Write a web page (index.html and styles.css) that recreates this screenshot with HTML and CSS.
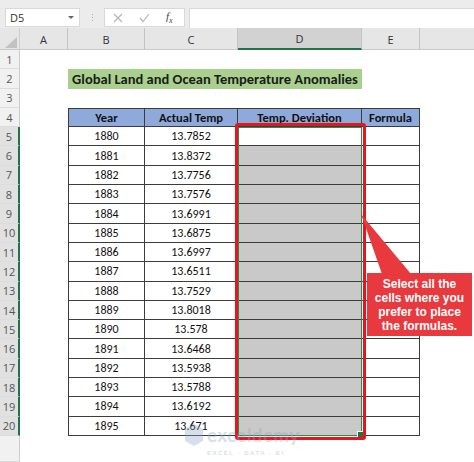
FILE: index.html
```html
<!DOCTYPE html>
<html lang="en">
<head>
    <meta charset="UTF-8">
    <title>Global Land and Ocean Temperature Anomalies</title>
    <link rel="stylesheet" href="styles.css">
</head>
<body>
    <div class="toolbar">
        <div class="namebox"><span>D5</span><span class="caret"></span></div>
        <div class="grip"><i></i><i></i><i></i></div>
        <div class="fxbox">
            <svg class="ico" width="10" height="10" viewBox="0 0 10 10"><path d="M1 1 L9 9 M9 1 L1 9" stroke="#b4b4b4" stroke-width="1.2" fill="none"/></svg>
            <svg class="ico" width="11" height="10" viewBox="0 0 11 10"><path d="M1 5 L4 8.5 L10 1" stroke="#b4b4b4" stroke-width="1.2" fill="none"/></svg>
            <span class="fx">f<sub>x</sub></span>
        </div>
        <div class="formula"></div>
    </div>

    <div class="sheet">
        <div class="colhead">
            <div class="corner"><svg width="20" height="22" viewBox="0 0 20 22"><polygon points="17,9 17,20 5,20" fill="#c2c2c2"/></svg></div>
            <div class="ch">A</div>
            <div class="ch">B</div>
            <div class="ch">C</div>
            <div class="ch on">D</div>
            <div class="ch">E</div>
            <div class="ch last"></div>
        </div>

        <div class="row"><div class="rh">1</div></div>
        <div class="row"><div class="rh">2</div><div class="c"></div><div class="title">Global Land and Ocean Temperature Anomalies</div></div>
        <div class="row"><div class="rh">3</div></div>
        <div class="row hdr"><div class="rh">4</div><div class="c"></div><div class="t first">Year</div><div class="t">Actual Temp</div><div class="t">Temp. Deviation</div><div class="t">Formula</div></div>
        <div class="row on"><div class="rh">5</div><div class="c"></div><div class="t first">1880</div><div class="t">13.7852</div><div class="t"></div><div class="t"></div></div>
        <div class="row on"><div class="rh">6</div><div class="c"></div><div class="t first">1881</div><div class="t">13.8372</div><div class="t g"></div><div class="t"></div></div>
        <div class="row on"><div class="rh">7</div><div class="c"></div><div class="t first">1882</div><div class="t">13.7756</div><div class="t g"></div><div class="t"></div></div>
        <div class="row on"><div class="rh">8</div><div class="c"></div><div class="t first">1883</div><div class="t">13.7576</div><div class="t g"></div><div class="t"></div></div>
        <div class="row on"><div class="rh">9</div><div class="c"></div><div class="t first">1884</div><div class="t">13.6991</div><div class="t g"></div><div class="t"></div></div>
        <div class="row on"><div class="rh">10</div><div class="c"></div><div class="t first">1885</div><div class="t">13.6875</div><div class="t g"></div><div class="t"></div></div>
        <div class="row on"><div class="rh">11</div><div class="c"></div><div class="t first">1886</div><div class="t">13.6997</div><div class="t g"></div><div class="t"></div></div>
        <div class="row on"><div class="rh">12</div><div class="c"></div><div class="t first">1887</div><div class="t">13.6511</div><div class="t g"></div><div class="t"></div></div>
        <div class="row on"><div class="rh">13</div><div class="c"></div><div class="t first">1888</div><div class="t">13.7529</div><div class="t g"></div><div class="t"></div></div>
        <div class="row on"><div class="rh">14</div><div class="c"></div><div class="t first">1889</div><div class="t">13.8018</div><div class="t g"></div><div class="t"></div></div>
        <div class="row on"><div class="rh">15</div><div class="c"></div><div class="t first">1890</div><div class="t">13.578</div><div class="t g"></div><div class="t"></div></div>
        <div class="row on"><div class="rh">16</div><div class="c"></div><div class="t first">1891</div><div class="t">13.6468</div><div class="t g"></div><div class="t"></div></div>
        <div class="row on"><div class="rh">17</div><div class="c"></div><div class="t first">1892</div><div class="t">13.5938</div><div class="t g"></div><div class="t"></div></div>
        <div class="row on"><div class="rh">18</div><div class="c"></div><div class="t first">1893</div><div class="t">13.5788</div><div class="t g"></div><div class="t"></div></div>
        <div class="row on"><div class="rh">19</div><div class="c"></div><div class="t first">1894</div><div class="t">13.6192</div><div class="t g"></div><div class="t"></div></div>
        <div class="row on"><div class="rh">20</div><div class="c"></div><div class="t first">1895</div><div class="t">13.671</div><div class="t g"></div><div class="t"></div></div>
        <div class="row tail"><div class="rh"></div></div>

        <!-- overlays: selection, annotation, watermark -->
        <div class="selbox"><span class="handle"></span></div>
        <div class="redbox"></div>
        <svg class="pointer" width="474" height="434" viewBox="0 0 474 434"><polygon points="361,186 382,246 411,246" fill="#e8393e"/></svg>
        <div class="callout">Select all the cells where you prefer to place the formulas.</div>
        <div class="watermark">
            <svg width="22" height="24" viewBox="0 0 22 24"><polygon points="2,6 11,1 20,6 20,18 11,23 2,18" fill="#8fa6c8"/></svg>
            <div class="wm-text"><b>exceldemy</b><small>EXCEL · DATA · BI</small></div>
        </div>
    </div>
</body>
</html>
```

FILE: styles.css
```css
body {
    margin: 0;
    width: 474px;
    height: 462px;
    overflow: hidden;
    background: #fff;
    font-family: Carlito, Lato, "Liberation Sans", sans-serif;
}

/* formula bar */
.toolbar {
    height: 28px;
    box-sizing: border-box;
    padding-top: 8px;
    background: #ececec;
    display: flex;
    align-items: flex-start;
}

.namebox {
    margin-left: 5px;
    width: 75px;
    height: 19px;
    box-sizing: border-box;
    background: #fff;
    border: 1px solid #d8d8d8;
    display: flex;
    align-items: center;
    justify-content: space-between;
    padding: 0 5px 0 4px;
    font: 11px "Open Sans", sans-serif;
    color: #333;
}

.caret {
    width: 0;
    height: 0;
    border-left: 3px solid transparent;
    border-right: 3px solid transparent;
    border-top: 3px solid #666;
}

.grip {
    width: 24px;
    height: 19px;
    display: flex;
    flex-direction: column;
    align-items: center;
    justify-content: center;
    gap: 2px;
}

.grip i {
    width: 1px;
    height: 1px;
    background: #aaa;
}

.fxbox {
    width: 81px;
    height: 19px;
    box-sizing: border-box;
    background: #fff;
    border: 1px solid #d8d8d8;
    display: flex;
    align-items: center;
    padding-left: 8px;
    gap: 16px;
}

.fx {
    font: italic 11px "Liberation Serif", serif;
    color: #444;
}

.fx sub {
    font-size: 8px;
}

.formula {
    margin-left: 4px;
    flex: 1;
    height: 19px;
    background: #fff;
    border: 1px solid #d8d8d8;
    border-right: none;
}

/* sheet grid */
.sheet {
    position: relative;
    --cols: 20px 48px 77px 93px 124px 58px 54px;
}

.colhead {
    display: grid;
    grid-template-columns: var(--cols);
    height: 22px;
    background: #e6e6e6;
    border-bottom: 1px solid #c9c9c9;
    box-sizing: border-box;
}

.corner {
    border-right: 1px solid #cfcfcf;
}

.corner svg {
    display: block;
}

.ch {
    display: flex;
    align-items: center;
    justify-content: center;
    border-right: 1px solid #c4c4c4;
    font: 11px "Open Sans", sans-serif;
    color: #333;
}

.ch.on {
    background: #d2d2d2;
    border-bottom: 2px solid #217346;
}

.ch.last {
    border-right: none;
}

.row {
    display: grid;
    grid-template-columns: var(--cols);
    height: 19.3px;
}

.row.tail {
    height: 26px;
}

.rh {
    display: flex;
    align-items: center;
    justify-content: center;
    box-sizing: border-box;
    background: #f1f1f1;
    border-right: 1px solid #cdcdcd;
    border-bottom: 1px solid #dcdcdc;
    font: 11px "Open Sans", sans-serif;
    color: #555;
}

.row.on .rh {
    background: #e1e1e1;
    border-right: 2px solid #217346;
}

.title {
    grid-column: span 3;
    background: #a9d08e;
    display: flex;
    align-items: center;
    justify-content: center;
    font-weight: bold;
    font-size: 14.5px;
    color: #1b1b1b;
}

/* table cells */
.t {
    display: flex;
    align-items: center;
    justify-content: center;
    box-sizing: border-box;
    border-right: 1px solid #3c3c3c;
    border-bottom: 1px solid #3c3c3c;
    font-size: 12px;
    color: #111;
}

.t.first {
    border-left: 1px solid #3c3c3c;
}

.hdr .t {
    background: #8eaadb;
    border-top: 1px solid #3c3c3c;
    font-weight: bold;
    font-size: 12.5px;
}

.t.g {
    background: #c9c9c9;
}

/* overlays */
.selbox {
    position: absolute;
    left: 238px;
    top: 99.2px;
    width: 124px;
    height: 308.8px;
    box-sizing: border-box;
    border: 1px solid #2f8a4f;
}

.handle {
    position: absolute;
    right: -3px;
    bottom: -3px;
    width: 5px;
    height: 5px;
    background: #217346;
    border: 1px solid #fff;
}

.redbox {
    position: absolute;
    left: 235px;
    top: 95px;
    width: 131px;
    height: 317px;
    box-sizing: border-box;
    border: 3px solid #e5161d;
    border-radius: 3px;
}

.pointer {
    position: absolute;
    left: 0;
    top: 0;
    pointer-events: none;
}

.callout {
    position: absolute;
    left: 367px;
    top: 245px;
    width: 105px;
    height: 63px;
    box-sizing: border-box;
    padding: 4px 6px;
    background: #e8393e;
    color: #fff;
    font: bold 12px/14px "Liberation Sans", Arial, sans-serif;
    text-align: center;
}

.watermark {
    position: absolute;
    left: 183px;
    top: 395px;
    display: flex;
    align-items: flex-start;
    gap: 2px;
    opacity: 0.35;
}

.wm-text {
    display: flex;
    flex-direction: column;
    line-height: 1;
}

.wm-text b {
    font: bold 19px Lato, sans-serif;
    color: #8fa6c8;
    letter-spacing: 0.3px;
}

.wm-text small {
    font: bold 6px "Liberation Sans", sans-serif;
    color: #8fa6c8;
    letter-spacing: 1.5px;
    margin-top: 4px;
}
```
